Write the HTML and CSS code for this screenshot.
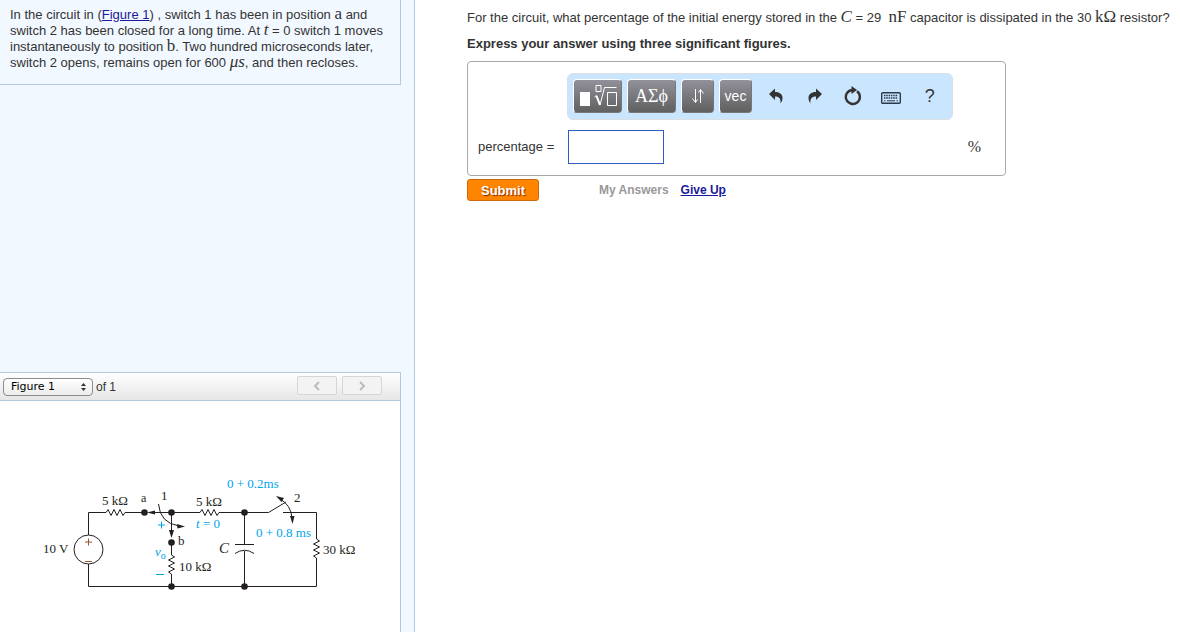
FILE: index.html
```html
<!DOCTYPE html>
<html lang="en">
  <head>
    <meta charset="utf-8">
    <title>Circuit problem</title>
    <link rel="stylesheet" href="styles.css">
  </head>
  <body>

    <div class="sidebar">
      <div class="intro">
        In the circuit in (<a href="#figure">Figure 1</a>) , switch 1 has been in position <span class="math">a</span> and switch 2 has been closed for a long time. At <i class="math">t</i> = 0 switch 1 moves instantaneously to position <span class="math">b</span>. Two hundred microseconds later, switch 2 opens, remains open for 600 <i class="math">μs</i>, and then recloses.
      </div>

      <div class="figure" id="figure">
        <div class="figure-bar">
          <div class="picker">
            <select id="figure-select" aria-label="Figure">
              <option>Figure 1</option>
            </select>
            <svg width="5" height="8" viewBox="0 0 5 8"><path d="M0 3L2.500 0L5 3zM0 5L2.500 8L5 5z" fill="#333"/></svg>
          </div>
          <label for="figure-select">of 1</label>
          <div class="pager">
            <button type="button" aria-label="Previous figure" disabled>
              <svg width="8" height="10" viewBox="0 0 8 10"><path d="M6 1L2 5L6 9"/></svg>
            </button>
            <button type="button" aria-label="Next figure" disabled>
              <svg width="8" height="10" viewBox="0 0 8 10"><path d="M2 1L6 5L2 9"/></svg>
            </button>
          </div>
        </div>

        <div class="figure-body">
          <svg class="circuit" width="320" height="124" viewBox="0 0 320 124">
            <!-- wires and resistors -->
            <g class="wire">
              <path d="M48.500 65V42.500H66l2 -3l3 6l3 -6l3 6l3 -6l3 6l2 -3H105"/>
              <path d="M131.500 42.500H160l2 -3l3 6l3 -6l3 6l3 -6l3 6l2 -3H228.500L246 32"/>
              <path d="M243 42.500H276.500V69l3 2l-6 3l6 3l-6 3l6 3l-6 3l3 2V116.500H48.500V94"/>
              <path d="M131.500 72V85l3 2l-6 3l6 3l-6 3l6 3l-6 3l3 2V116"/>
              <path d="M204.500 42V74.500M195 74.500H214M204.500 81V116M195 83.500Q204.500 77 214 83.500"/>
              <circle cx="48.500" cy="79.500" r="14.500"/>
              <path d="M131.500 42.500H112M131.500 42.500V61"/>
              <path d="M118.500 34Q120 53 139 56"/>
              <path d="M240 29Q251 35 252 48"/>
            </g>
            <!-- nodes and arrow heads -->
            <g class="solid">
              <circle cx="104.500" cy="42.500" r="3.300"/>
              <circle cx="131.500" cy="42.500" r="3.300"/>
              <circle cx="131.500" cy="72.500" r="3.300"/>
              <circle cx="131.500" cy="116.500" r="3.300"/>
              <circle cx="204.500" cy="42.500" r="3.300"/>
              <circle cx="204.500" cy="116.500" r="3.300"/>
              <path d="M107 42.500L115 40.500V44.500z"/>
              <path d="M131.500 68L129 60H134z"/>
              <path d="M145 56.500L137 54L137.500 58.500z"/>
              <path d="M236 26L244 28L241.500 32z"/>
              <path d="M252.500 54L250 46H254.500z"/>
            </g>
            <text x="62" y="35">5 kΩ</text>
            <text x="101" y="32" class="small">a</text>
            <text x="121" y="30">1</text>
            <text x="156" y="36">5 kΩ</text>
            <text x="254" y="32">2</text>
            <text x="3" y="83">10 V</text>
            <text x="138" y="75">b</text>
            <text x="139" y="101">10 kΩ</text>
            <text x="179" y="83" class="var">C</text>
            <text x="283" y="84">30 kΩ</text>
            <path class="polarity" d="M45 72H52M48.500 68.500V75.500M45 91.500H52"/>
            <g class="note">
              <text x="187" y="18">0 + 0.2ms</text>
              <text x="216" y="67">0 + 0.8 ms</text>
              <text x="156" y="58"><tspan font-style="italic">t</tspan> = 0</text>
              <text x="115" y="86"><tspan font-style="italic">v</tspan><tspan dy="3" font-size="10">o</tspan></text>
              <path d="M118 55H125M121.500 51.500V58.500M116 104.500H124"/>
            </g>
          </svg>
        </div>
      </div>
    </div>

    <form class="question">
      <p>For the circuit, what percentage of the initial energy stored in the <i class="math">C</i> = 29 &nbsp;<span class="math">nF</span> capacitor is dissipated in the 30 <span class="math">kΩ</span> resistor?</p>
      <p><strong>Express your answer using three significant figures.</strong></p>

      <div class="answer">
        <div class="toolbar">
          <button type="button" class="key wide" aria-label="Templates">
            <svg width="38" height="22" viewBox="0 0 38 22">
              <path d="M1 7h10v14H1z" fill="#fff"/>
              <path d="M17 .5h5v6h-5zM15.500 12l2 -1.500L21 20L25.500 2.500H37.500M28.500 7.500h9v13h-9z" fill="none" stroke="#fff"/>
              <path d="M17.500 11L21 20" stroke="#fff" stroke-width="2"/>
            </svg>
          </button>
          <button type="button" class="key wide greek">ΑΣϕ</button>
          <button type="button" class="key" aria-label="Arrows">
            <svg width="14" height="16" viewBox="0 0 14 16"><path d="M4.500 1V14M1.500 10.500L4.500 14.500L6.500 11.500M9.500 15V2M7.500 4.500L9.500 1.500L12.500 5.500" fill="none" stroke="#fff"/></svg>
          </button>
          <button type="button" class="key">vec</button>

          <div class="tools">
            <button type="button" class="tool" aria-label="Undo">
              <svg width="16" height="16" viewBox="0 0 16 16"><path d="M1 6L7 .5V4C12 4 14.500 6.500 14.500 10C14.500 12.500 13.500 14 12.500 15.500C13 11 11.500 8.500 7 8.500V12z"/></svg>
            </button>
            <button type="button" class="tool" aria-label="Redo">
              <svg width="16" height="16" viewBox="0 0 16 16"><path d="M15 6L9 .5V4C4 4 1.500 6.500 1.500 10C1.500 12.500 2.500 14 3.500 15.500C3 11 4.500 8.500 9 8.500V12z"/></svg>
            </button>
            <button type="button" class="tool" aria-label="Reset">
              <svg width="18" height="20" viewBox="0 0 18 20"><path d="M13 5.300A7 7 0 1 1 8 4" fill="none" stroke="#333" stroke-width="2.400"/><path d="M7.500 0L13 4L7.500 8z"/></svg>
            </button>
            <button type="button" class="tool" aria-label="Keyboard">
              <svg class="keyboard" width="20" height="12" viewBox="0 0 20 12"><rect x=".7" y=".7" width="18.600" height="10.600" rx="1" fill="none" stroke="#2b3a4a" stroke-width="1.400"/><path d="M3 3.500H17M3 6H17" fill="none" stroke="#2b3a4a" stroke-width="1.500" stroke-dasharray="1.500 .8"/><path d="M3 8.800H4.500M6 8.800H14M15.500 8.800H17" stroke="#2b3a4a"/></svg>
            </button>
            <button type="button" class="tool help">?</button>
          </div>
        </div>

        <label for="percentage">percentage =</label>
        <input id="percentage" type="text">
        <span class="math unit">%</span>
      </div>

      <div class="actions">
        <button type="submit" class="submit">Submit</button>
        <span class="my-answers">My Answers</span>
        <a href="#">Give Up</a>
      </div>
    </form>

  </body>
</html>
```
FILE: styles.css
```css
* {
  box-sizing: border-box;
}
body {
  display: flex;
  min-height: 100vh;
  margin: 0;
  background: #fff;
  color: #333;
  font: 13px/16px "Liberation Sans", Arial, sans-serif;
}
a {
  color: #1a1a9c;
}
button {
  padding: 0;
  font-family: inherit;
  cursor: pointer;
}
.math {
  font-family: "Liberation Serif", "Times New Roman", serif;
  font-size: 17px;
  line-height: 12px;
}

/* left column */
.sidebar {
  display: flex;
  flex: 0 0 415px;
  flex-direction: column;
  justify-content: space-between;
  padding-right: 13px;
  background: #f2f8ff;
  border-right: 1px solid #b4c9dc;
}
.intro {
  padding: 7px 10px 13px;
  border-right: 1px solid #b4c9dc;
  border-bottom: 1px solid #b4c9dc;
}
.figure {
  background: #fff;
  border-top: 1px solid #b4c9dc;
  border-right: 1px solid #b4c9dc;
}
.figure-bar {
  display: flex;
  align-items: center;
  gap: 3px;
  height: 28px;
  padding: 0 18px 0 3px;
  border-bottom: 1px solid #b4c9dc;
  background: linear-gradient(#fff, #e6e6e6);
  font-size: 12px;
}
.picker {
  position: relative;
  display: flex;
}
.picker select {
  width: 90px;
  height: 18px;
  padding: 0 7px;
  border: 1px solid #8c8c8c;
  border-radius: 4px;
  background: linear-gradient(#fff, #ececec);
  color: #000;
  font: 11px "DejaVu Sans", sans-serif;
  appearance: none;
}
.picker svg {
  position: absolute;
  top: 5px;
  right: 7px;
  pointer-events: none;
}
.pager {
  display: flex;
  gap: 5px;
  margin-left: auto;
  padding-bottom: 2px;
}
.pager button {
  display: flex;
  align-items: center;
  justify-content: center;
  width: 40px;
  height: 19px;
  border: 1px solid #d6d6d6;
  border-radius: 2px;
  background: #f3f3f3;
}
.pager path {
  fill: none;
  stroke: #bbb;
  stroke-width: 2;
}
.figure-body {
  padding: 69px 40px 38px;
}

/* circuit drawing */
.circuit {
  display: block;
  font: 13px "Liberation Serif", "Times New Roman", serif;
}
.circuit text {
  fill: #231f20;
}
.circuit .small {
  font-size: 12px;
}
.circuit .var {
  font-size: 15px;
  font-style: italic;
}
.wire {
  fill: none;
  stroke: #231f20;
}
.solid {
  fill: #231f20;
}
.polarity {
  stroke: #a0522d;
}
.circuit .note text {
  fill: #00a4ec;
}
.note path {
  stroke: #00a4ec;
}

/* question */
.question {
  flex: 1;
  min-width: 0;
  padding: 10px 0 0 52px;
}
.question p {
  margin: 0 0 10px;
}
.question p + p {
  margin-bottom: 9px;
}
.answer {
  display: grid;
  grid-template-columns: 90px 96px 1fr;
  align-items: center;
  row-gap: 10px;
  max-width: 539px;
  padding: 11px 24px 11px 10px;
  border: 1px solid #aaa;
  border-radius: 4px;
}
.toolbar {
  display: flex;
  grid-column: 2 / 4;
  align-items: center;
  gap: 5px;
  width: 386px;
  height: 47px;
  margin-left: -1px;
  padding: 0 3px 1px 5px;
  border: 1px solid #dadfe4;
  border-radius: 6px;
  background: #cae6ff;
}
.key {
  display: flex;
  align-items: center;
  justify-content: center;
  width: 33px;
  height: 34px;
  border: 1px solid;
  border-color: #fff #777 #777 #fff;
  border-radius: 4px;
  background: linear-gradient(#92919a, #606060);
  color: #fff;
  font-size: 14px;
}
.key.wide {
  width: 49px;
}
.key.greek {
  font-family: "Liberation Serif", "Times New Roman", serif;
  font-size: 18px;
}
.tools {
  display: flex;
  flex: 1;
}
.tool {
  display: flex;
  flex: 1;
  align-items: center;
  justify-content: center;
  height: 34px;
  padding: 0;
  border: 0;
  background: none;
  color: #333;
  fill: #333;
}
.keyboard {
  margin-top: 4px;
}
.help {
  font-size: 18px;
}
.answer input {
  width: 96px;
  height: 34px;
  border: 1px solid #2f5bc4;
  background: #fff;
  font: inherit;
}
.unit {
  justify-self: end;
  font-size: 16px;
}
.actions {
  display: flex;
  align-items: center;
  margin-top: 3px;
  font-weight: bold;
  font-size: 12px;
}
.submit {
  width: 72px;
  height: 22px;
  margin-right: 60px;
  border: 1px solid #cd6a10;
  border-radius: 3px;
  background: #ff8500;
  color: #fff;
  font-weight: bold;
  font-size: 13px;
  text-shadow: 1px 1px 1px #803000;
}
.my-answers {
  margin-right: 12px;
  color: #999;
}
```
